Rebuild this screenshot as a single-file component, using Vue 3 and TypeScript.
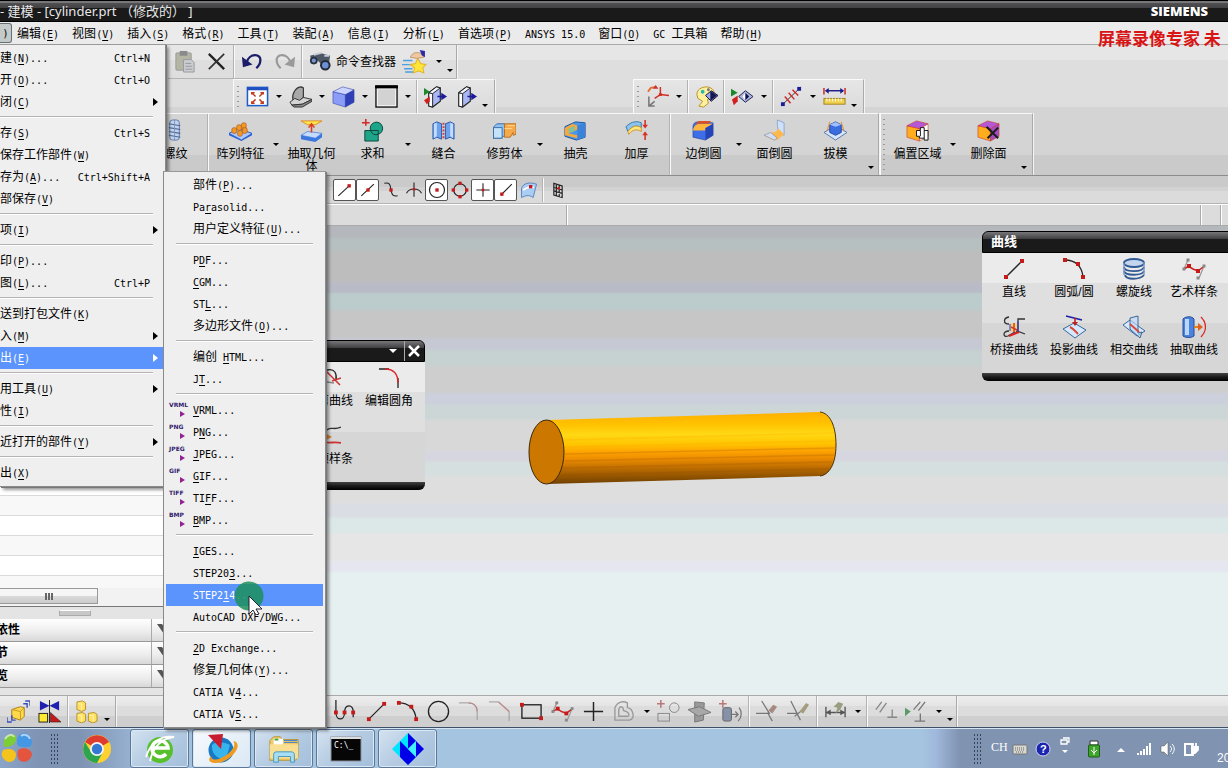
<script setup lang="ts">
import { h, type FunctionalComponent } from 'vue'

/* Splits a caption into Latin and CJK runs; "&" marks the access key that follows it. */
const Txt: FunctionalComponent<{ s: string }> = (p) => {
  const runs = p.s.match(/&.|[\x20-\x25\x27-\x7e]+|[^\x20-\x7e]+/g) ?? []
  return h('span', { class: 'txt' }, runs.map((r) =>
    r[0] === '&' ? h('u', { class: 'lat' }, r[1]) : /[\x20-\x7e]/.test(r[0]) ? h('span', { class: 'lat' }, r) : r))
}
Txt.props = ['s']

interface Tool { k: 'i' | 'd' | 'e' | 's' | 'g' | 't'; n?: string; t?: string; on?: boolean }
const i = (n: string, t = '', on = false): Tool => ({ k: 'i', n, t, on })
const d: Tool = { k: 'd' }
const e: Tool = { k: 'e' }
const s: Tool = { k: 's' }
const g: Tool = { k: 'g' }

const menus = ['编辑(&E)', '视图(&V)', '插入(&S)', '格式(&R)', '工具(&T)', '装配(&A)', '信息(&I)', '分析(&L)', '首选项(&P)', 'ANSYS 15.0', '窗口(&O)', 'GC 工具箱', '帮助(&H)']

interface Item { t: string; key?: string; sub?: boolean; hot?: boolean; tag?: string }
const fileMenu: (Item | null)[] = [
  { t: '建(&N)...', key: 'Ctrl+N' }, { t: '开(&O)...', key: 'Ctrl+O' }, { t: '闭(&C)', sub: true }, null,
  { t: '存(&S)', key: 'Ctrl+S' }, { t: '保存工作部件(&W)' }, { t: '存为(&A)...', key: 'Ctrl+Shift+A' }, { t: '部保存(&V)' }, null,
  { t: '项(&I)', sub: true }, null, { t: '印(&P)...' }, { t: '图(&L)...', key: 'Ctrl+P' }, null,
  { t: '送到打包文件(&K)' }, { t: '入(&M)', sub: true }, { t: '出(&E)', sub: true, hot: true }, null,
  { t: '用工具(&U)', sub: true }, { t: '性(&I)' }, null, { t: '近打开的部件(&Y)', sub: true }, null, { t: '出(&X)' }
]
const exportMenu: (Item | null)[] = [
  { t: '部件(&P)...' }, { t: 'Pa&rasolid...' }, { t: '用户定义特征(&U)...' }, null,
  { t: 'P&DF...' }, { t: '&CGM...' }, { t: 'ST&L...' }, { t: '多边形文件(&O)...' }, null,
  { t: '编创 &HTML...' }, { t: 'J&T...' }, null,
  { t: '&VRML...', tag: 'VRML' }, { t: 'P&NG...', tag: 'PNG' }, { t: '&JPEG...', tag: 'JPEG' }, { t: '&GIF...', tag: 'GIF' }, { t: 'TI&FF...', tag: 'TIFF' }, { t: '&BMP...', tag: 'BMP' }, null,
  { t: '&IGES...' }, { t: 'STEP20&3...' }, { t: 'STEP2&14...', hot: true }, { t: 'AutoCAD DXF/D&WG...' }, null,
  { t: '&2D Exchange...' }, { t: '修复几何体(&Y)...' }, { t: 'CATIA V&4...' }, { t: 'CATIA V&5...' }
]

const standardBar: Tool[] = [i('paste'), i('del'), s, i('undo'), i('redo'), s, i('find'), { k: 't', t: '命令查找器' }, i('star'), d, e]
const viewBar: Tool[] = [g, i('fit'), d, i('seat'), d, i('cube'), d, i('rect'), d, s, i('clipEdit'), i('clip'), e]
const utilBar: Tool[] = [g, i('csys'), d, s, i('palette'), s, i('showhide'), d, s, i('measure'), d, i('ruler'), e]
const featureBar: Tool[] = [i('thread', '螺纹'), s, i('array', '阵列特征'), d, i('extract', '抽取几何体'), i('unite', '求和'), d, i('sew', '缝合'), i('trim', '修剪体'), d, i('shell', '抽壳'), i('thick', '加厚'), s, i('edge', '边倒圆'), d, i('face', '面倒圆'), i('draft', '拔模'), e]
const syncBar: Tool[] = [g, i('offset', '偏置区域'), d, i('delface', '删除面'), e]
const snapBar: Tool[] = [i('endpt', '', true), i('midpt', '', true), i('ctrlpt'), i('inter'), i('center', '', true), i('quad'), i('exist', '', true), i('oncurve', '', true), i('onface'), s, i('grid')]
const leftBar: Tool[] = [i('move'), i('mirror'), s, i('asm'), e]
const curveBar: Tool[] = [i('profile'), i('line'), i('arc'), i('circle'), i('fillet'), i('chamfer'), i('rectpt'), i('spline'), i('plus'), i('offcurve'), d, i('pattern'), i('isect'), i('project'), s, i('qtrim'), i('qextend'), s, i('dim'), d, s, i('constr'), i('auto'), d, e]
const curvePanel: [string, string][] = [['line', '直线'], ['arc', '圆弧/圆'], ['helix', '螺旋线'], ['spline', '艺术样条'], ['bridge', '桥接曲线'], ['projc', '投影曲线'], ['isectc', '相交曲线'], ['extc', '抽取曲线']]
const editPanel: [string, string][] = [['trimc', '修剪曲线'], ['editf', '编辑圆角'], ['smooth', '光顺样条']]

const r = (x: number, y: number, c = '#c41a1a', w = 4) => `<rect x="${x - w / 2}" y="${y - w / 2}" width="${w}" height="${w}" fill="${c}"/>`
const cube = (a: string, b: string, c: string, o = '#445') => `<g stroke="${o}" stroke-width=".6"><path d="M1 7 14 10V23L1 19z" fill="${a}"/><path d="M14 10 23 5V18L14 23z" fill="${b}"/><path d="M1 7 11 2 23 5 14 10z" fill="${c}"/></g>`
const book = '<path d="M5 8 13 2 17 3V17L9 23 5 22z" fill="#a9b8f5" stroke="#222" stroke-width="1.2"/><path d="M5 8 9 9V23L5 22z" fill="#fff" stroke="#222"/><path d="M5 8 13 2 17 3 9 9z" fill="#f4f6ff" stroke="#222"/><path d="M14 12H22" stroke="#1a1a9a" stroke-width="1.6"/><path d="M18 8 24 12 18 16z" fill="#1a1a9a"/>'
const eye = '<path d="M8 12 15 6 23 12 15 18z" fill="#aeb8dd" stroke="#225"/><path d="M12 12 15 8V16z" fill="#fff"/><path d="M15 8 19 12 15 16z" fill="#115"/>'
const ln = (p: string, c = '#222', w = 1.3) => `<path d="${p}" fill="none" stroke="${c}" stroke-width="${w}"/>`

const icons: Record<string, string> = {
  paste: '<rect x="3" y="3" width="16" height="18" rx="1" fill="#b5b5a5" stroke="#999"/><rect x="7" y="1" width="8" height="5" fill="#8a8a8a"/><path d="M11 10h8l3 3v10H11z" fill="#c9ccd2" stroke="#999"/><path d="M13 14h6M13 17h7M13 20h7" stroke="#999"/>',
  del: '<path d="M4 4 20 20" stroke="#222" stroke-width="2.4"/><path d="M20 4 4 20" stroke="#333" stroke-width="1.8"/>',
  undo: '<path d="M6 13C8 3 22 3 20 12C20 15 18 17 16 19" fill="none" stroke="#1c1c6a" stroke-width="2.4"/><path d="M1 7 2 18 12 15z" fill="#1c1c6a"/>',
  redo: '<path d="M18 13C16 3 2 3 4 12C4 15 6 17 8 19" fill="none" stroke="#999" stroke-width="2.2"/><path d="M23 7 22 18 12 15z" fill="#999"/>',
  find: '<path d="M1 6 12 3 22 6 21 13 14 16 9 11 4 14z" fill="#4c5866"/><circle cx="5" cy="11" r="4" fill="#28303e"/><circle cx="5" cy="11" r="2.2" fill="#7794cc"/><circle cx="17" cy="16" r="5.5" fill="#222a38"/><circle cx="17" cy="16" r="3.4" fill="#6e8fd6"/><path d="M5 5 13 3M16 6 21 6" stroke="#c8ccd4" stroke-width="2"/>',
  star: '<path d="M1 11h9M0 15h10M2 19h8M3 22h8" stroke="#4ba0df" stroke-width="1.4"/><path d="M15 9 18 14 23 15 20 18 21 23 16 21 11 23 12 18 8 15 13 14z" fill="#ffe43a" stroke="#e0b62a"/><path d="M8 8C10 3 14 3 18 4L21 8 14 9z" fill="#f0c8a0" stroke="#a87850" stroke-width=".6"/><path d="M17 1 22 2V8L19 6z" fill="#2a2aa8"/>',
  fit: '<rect x="1.500" y="2.500" width="21" height="19" fill="#fff" stroke="#1f5dc8" stroke-width="1.6"/><path d="M1 4H23" stroke="#1f4fc0" stroke-width="3"/><g stroke="#c33a1e" stroke-width="1.5" fill="none"><path d="M6 10V8H9M6 8 10 12M18 10V8H15M18 8 14 12M6 17V19H9M6 19 10 15M18 17V19H15M18 19 14 15"/></g>',
  seat: '<path d="M4 15C3 9 7 2 13 2L15 3V13L10 18z" fill="#a8a8a8" stroke="#333" stroke-width="1.2"/><path d="M1 18 6 14 11 16 15 13 24 15 14 20 3 21z" fill="#d4d4d4" stroke="#333"/><path d="M3 21 14 20 24 15V17L14 23H5z" fill="#888" stroke="#333"/>',
  cube: cube('#8a9cf8', '#2f3fb5', '#ccd4ff', '#3344a8'),
  rect: '<rect x="1" y="1" width="22" height="22" fill="#d2d2d2" stroke="#111" stroke-width="1.4"/><rect x="2.500" y="4" width="19" height="17.500" fill="none" stroke="#f4f4f4"/><path d="M0 2H24" stroke="#000" stroke-width="3"/>',
  clipEdit: book + '<path d="M0 3 6 7 0 11z" fill="#1a8a2c"/><path d="M0 16 6 12V17L3 20z" fill="#d02020"/>',
  clip: book,
  csys: ln('M15 10V2M15 10 9 14M15 10 24 11', '#d22f22', 1.5) + ln('M3 12V22H9M3 22 9 17', '#777', 1.6) + '<path d="M2 7 5 3 11 2" fill="none" stroke="#e07030" stroke-width="2"/><path d="M10 0 13 4 7 4z" fill="#c33"/>' + r(15, 10, '#d22f22', 3),
  palette: '<path d="M2 10C2 0 20-1 20 9L17 14 13 15 14 19 9 23 4 22 8 17 3 14z" fill="#fff0a0" stroke="#b89020"/><circle cx="8" cy="7" r="2" fill="#26b8b0"/><circle cx="14" cy="5" r="1.500" fill="#777"/><path d="M11 11 17 6 24 11 17 17z" fill="#98a8e8" stroke="#113"/><path d="M16 6 23 11 16 17z" fill="#181850"/>',
  showhide: '<path d="M0 4 7 8 0 12z" fill="#188a2c"/><path d="M1 15 7 11V17L3 21z" fill="#d02020"/>' + eye,
  measure: ln('M2 21 22 2', '#333', 1) + ln('M5 12 11 19M9 8 15 15M13 5 19 11', '#d02828', 1.5) + r(3, 20, '#1c1c9a') + r(20, 4, '#1c1c9a'),
  ruler: ln('M1 3V10M23 3V10', '#c22', 1.5) + ln('M3 6H21', '#1a1a8a', 1.5) + '<path d="M2 6 6 3V9zM22 6 18 3V9z" fill="#1a1a8a"/><rect x="1" y="14" width="22" height="6" fill="#f2d24a" stroke="#a08020"/><path d="M4 14v3M7 14v3M10 14v3M13 14v3M16 14v3M19 14v3" stroke="#fff"/>',
  thread: '<rect x="6" y="1" width="10" height="21" rx="3" fill="#c3d3ec" stroke="#5c78a8"/>' + ln('M5 5 17 7M5 9 17 11M5 13 17 15M5 17 17 19', '#4a6898', 1.2) + ln('M11 1V22', '#7d95bd', 1),
  array: '<path d="M0 15 10 10 24 15 13 22z" fill="#a8c8ff" stroke="#2858c8"/><path d="M0 15V17L13 23 24 17V15L13 22z" fill="#2a62dc"/><g fill="#f09828" stroke="#a84e10" stroke-width=".6"><rect x="3" y="9" width="5" height="6" rx="2"/><rect x="8" y="6" width="5" height="6" rx="2"/><rect x="13" y="4" width="5" height="6" rx="2"/><rect x="9" y="12" width="5" height="6" rx="2"/><rect x="14" y="9" width="5" height="6" rx="2"/></g>',
  extract: '<path d="M1 17 8 13 23 15 16 20z" fill="#c4dcff" stroke="#3a70d0" stroke-width=".7"/><path d="M1 17V21L16 24V20zM16 20 23 15V19L16 24z" fill="#3a78e0"/><path d="M1 2H23L16 6H8z" fill="#ffe94a" stroke="#e08a20"/><path d="M12 14V5M9 9 12 5 15 9" stroke="#dc3d20" stroke-width="1.6" fill="none"/>',
  unite: '<path d="M4 12H10A6.500 6.500 0 1 1 18 16V23H4z" fill="#1da58a" stroke="#0d4538"/><path d="M10 12A6 6 0 0 0 18 16V12z" fill="none" stroke="#0d4538"/>' + ln('M5 0V7M1 4H9', '#d22828', 1.6),
  sew: '<path d="M1 5 5 3 10 5V21L5 19 1 21zM14 5 19 3 23 5V21L19 19 14 21z" fill="#6ca2ee" stroke="#2858a8"/><path d="M2 5 5 4V18L2 20zM19 4 22 5V20L19 18z" fill="#c4dcff"/><path d="M12 4V21" stroke="#e03838" stroke-width="2" stroke-dasharray="2 1.500"/>',
  trim: '<path d="M0 9 4 5H12V17L9 20H0z" fill="#8fc0ee" stroke="#3870a8"/><rect x="0.500" y="9" width="9" height="11" fill="#c4e2fa" stroke="#3870a8"/><path d="M12 5 24 5V16L21 17V14L18 19H12z" fill="#f5aa4a" stroke="#b87024"/><path d="M12 10H20M15 7 23 7" stroke="#ffd898"/>',
  shell: '<path d="M1 8 12 3 22 4V19L13 22 1 18z" fill="#4a96e8" stroke="#1c5098"/><path d="M1 9 9 5 14 7V11L5 15 14 17V20L1 17z" fill="#f7a83c"/><path d="M5 10 11 7V12L5 15z" fill="#7ac4a0"/><path d="M14 7 22 4V19L14 22z" fill="#3a82da"/>',
  thick: '<path d="M1 8C7 2 13 2 17 4V9C12 6 8 7 3 13z" fill="#8ac4ee" stroke="#3878a8"/><path d="M3 13C8 7 12 6 17 9V13C12 10 8 11 4 16z" fill="#ffe878" stroke="#d09030"/><path d="M21 1V8M21 14V22" stroke="#d83020" stroke-width="1.6"/><path d="M18 6H24L21 10zM18 17H24L21 13z" fill="#d83020"/>',
  edge: '<path d="M1 8C1 5 3 3 6 3L22 4V17L14 22 1 19z" fill="#3d6ee8" stroke="#1c3898" stroke-width=".6"/><path d="M1 12C2 7 4 6 7 5L22 5 14 9V12z" fill="#ffb63c"/><path d="M3 6 7 2H20L17 5H7z" fill="#d85028"/><path d="M14 10 22 5V17L14 22z" fill="#2444b8"/>',
  face: '<path d="M15 1 22 4V17L16 13C15 9 15 5 15 1z" fill="#cfe0fa" stroke="#6f94c8" stroke-width=".7"/><path d="M1 17 9 14C14 14 15 12 16 10L22 16 15 22 11 22z" fill="#ffb84c"/><path d="M1 17 8 14 15 20 12 22z" fill="#d2ddf2" stroke="#8890a8" stroke-width=".7"/>',
  draft: '<path d="M0 14 12 7 24 14 12 22z" fill="#d5e5ff" stroke="#5878a8"/><path d="M6 6 12 3 18 6V14L12 17 6 14z" fill="#3a6ee0" stroke="#24489a"/><path d="M6 6 12 3 18 6 12 8z" fill="#a0c0ff"/><path d="M3 13 6 3M21 13 18 3" stroke="#e88a30"/>',
  offset: cube('#ffad1c', '#fff', '#b558d8', '#c83a28') + '<path d="M11 12h4V9h4v3h4v10h-4v-2h-5v-2h-3z" fill="#fff" stroke="#111"/><path d="M15 12v6M19 12v8" stroke="#111"/>',
  delface: cube('#ffad1c', '#a54cc4', '#b558d8', '#c83a28') + '<path d="M10 8 22 20M22 9 11 20" stroke="#1c1c1c" stroke-width="2.2"/>',
  endpt: ln('M4 19 16 8') + r(17, 7), midpt: ln('M4 19 19 5') + r(12, 12),
  ctrlpt: ln('M4 4C12 2 11 8 12 12S13 20 20 19') + r(12, 12), inter: ln('M12 3V20M3 16C6 9 18 9 21 16') + r(12, 11, '#c41a1a', 3),
  center: '<circle cx="12" cy="12" r="9" fill="none" stroke="#222" stroke-width="1.4"/>' + r(12, 12),
  quad: '<circle cx="12" cy="12" r="7.500" fill="none" stroke="#222" stroke-width="1.400"/>' + r(12, 4) + r(12, 20) + r(4, 12) + r(20, 12),
  exist: ln('M12 4V20M4 12H20') + r(12, 12, '#c41a1a', 3), oncurve: ln('M6 18 19 5') + r(7, 17),
  onface: '<path d="M3 10C5 4 12 2 21 5L17 21C11 17 8 19 3 21z" fill="#aacdf5" stroke="#4a78b8"/><path d="M5 12C10 8 14 8 18 9" stroke="#fff" fill="none" stroke-width="2"/>' + r(14, 8),
  grid: ln('M7 4 17 7V21L7 18zM7 9 17 12M7 13 17 16M10 5V19M13.500 6V20', '#222', 1.4) + r(13, 10, '#c41a1a', 3),
  line: ln('M4 20 20 4') + r(4, 20) + r(20, 4), arc: ln('M3 3C13 3 20 9 21 20') + r(3, 3) + r(16, 7) + r(21, 20),
  circle: '<circle cx="12" cy="12" r="10.500" fill="none" stroke="#222" stroke-width="1.400"/>',
  profile: ln('M2 0V13C2 22 11 22 11 13C11 4 20 4 20 12V18') + r(2, 13) + r(11, 13) + r(20, 13),
  fillet: ln('M1 3H11C17 3 20 7 20 12V21', '#999', 1) + ln('M11 3C17 3 20 7 20 12', '#b88', 1.300),
  chamfer: ln('M0 2H10L21 12V22', '#999', 1) + ln('M10 2 21 12', '#b88', 1.300),
  rectpt: '<rect x="2" y="5" width="20" height="14" fill="none" stroke="#222" stroke-width="1.400"/>' + r(2, 5) + r(22, 19),
  spline: ln('M2 12 6 3M17 21 22 9', '#999') + ln('M6 9 11 12 16 14M2 12 7 9M16 14 21 10', '#c22', 1.5) + r(6, 3, '#888', 3) + r(2, 12, '#888', 3) + r(22, 9, '#888', 3) + r(16, 21, '#888', 3) + r(7, 9) + r(16, 14),
  plus: ln('M12 2V22M2 12H22', '#222', 1.5),
  offcurve: ln('M2 21V8C5 1 11 1 15 3V8C21 9 24 20 17 21zM6 17V10C7 5 11 7 11 11C17 12 18 17 15 17z', '#999', 1.4),
  pattern: ln('M4 0V8M0 4H8', '#b87878', 1.600) + '<circle cx="18" cy="8" r="5" fill="none" stroke="#888"/><rect x="1" y="14" width="12" height="8" fill="none" stroke="#888"/>',
  isect: '<path d="M7 2 17 3 16 21 7 23z" fill="#999" stroke="#777"/><path d="M0 10 12 7 24 13 11 17z" fill="#a8a8a8" stroke="#777"/>',
  project: ln('M4 0V8M0 4H8', '#b87878', 1.6) + '<rect x="4" y="8" width="9" height="14" rx="2" fill="#8592a8" stroke="#666"/>' + ln('M13 15H20M17 12 20 15 17 18M21 8C24 12 24 18 20 22', '#777'),
  qtrim: ln('M0 14H14L6 1M12 13 17 22', '#777', 1.300) + '<path d="M13 11 18 5 22 7 17 14z" fill="#a68a80"/>',
  qextend: ln('M0 14H12M4 1 14 21M8 17 18 9', '#777', 1.300) + '<path d="M13 12 20 3 23 5 17 14z" fill="#a49c80"/>',
  dim: ln('M2 7V18M22 7V18M2 13H22', '#555', 1.400) + '<path d="M2 13 7 10V16zM22 13 17 10V16z" fill="#555"/><path d="M10 7 15 2 20 4 17 10 12 14 14 8z" fill="#999e80"/>',
  constr: ln('M2 10 8 2M6 13 13 3M14 18H24M19 10V18', '#888', 1.400),
  auto: '<path d="M0 8 6 12 0 17z" fill="#5a9a6c"/>' + ln('M9 10 16 2M14 11 21 2M10 22H21M16 14V22', '#777', 1.400),
  helix: '<ellipse cx="12" cy="6" rx="9" ry="4" fill="#c4d6ee"/><g fill="none" stroke="#315a94" stroke-width="1.800"><ellipse cx="12" cy="6" rx="10" ry="4"/><path d="M2 10C2 15 20 16 22 10M2 14C3 19 20 19 22 14M3 18C4 23 18 23 22 18"/></g>' + ln('M2 6V18M22 5V18', '#7697c4', 1.4),
  bridge: ln('M7 2C1 3 1 9 7 9M23 4H16V16M7 16C0 16 1 23 6 21L15 16 23 19', '#333') + ln('M7 21 17 17', '#d22', 2) + '<path d="M8 9 15 8 14 17 8 16z" fill="#f4d070"/>' + ln('M12 8V17M9 12 15 15', '#d63a2a', 1.500) + ln('M8 9V16M16 6V17', '#2a3ac0', 1),
  projc: '<path d="M1 14 12 8 24 15 13 23z" fill="#d4e8ff" stroke="#3a6898"/>' + ln('M8 12C12 14 14 17 16 19', '#d84830', 2) + ln('M4 1 20 5', '#1c1ca8', 1.600) + ln('M13 3V9', '#b22', 1.600) + '<path d="M10 7H16L13 11z" fill="#b22"/>',
  isectc: '<path d="M1 10 8 5 23 16 15 21z" fill="#d8eaff" stroke="#3a6898"/><path d="M8 3 16 1V18L20 17 18 23 8 14z" fill="#bcd8ff99" stroke="#3a6898"/>' + ln('M8 9 17 17', '#d84830', 1.800),
  extc: '<path d="M1 4C4 1 10 1 12 4V21C9 23 4 23 1 21z" fill="#4a82dc" stroke="#2a4a98"/><path d="M3 4H7V20H3z" fill="#bcd6ff"/>' + ln('M12 12H19', '#e08020', 2) + '<path d="M16 8 21 12 16 16z" fill="#e06020"/>' + ln('M19 2C25 8 25 16 19 22', '#d22', 1.300),
  trimc: ln('M10 4C18 2 20 8 19 14', '#222') + ln('M9 5 23 19M15 15 24 12', '#c33', 1.500) + ln('M10 16 17 17', '#888'),
  editf: ln('M2 3H12M21 12V22', '#222') + ln('M8 3C17 3 21 8 21 17', '#d22', 1.300),
  smooth: ln('M8 8C14 1 16 7 24 3', '#333') + ln('M8 18C14 20 16 17 24 19', '#c33', 1.800) + '<path d="M8 9 15 13 9 16z" fill="#d88030"/>',
  move: '<path d="M5 10 14 7 18 8V17L14 21 5 18z" fill="#ffd94c" stroke="#a87c18"/><path d="M5 10 14 12 18 8M14 12V21" fill="none" stroke="#c89828"/>' + ln('M17 4H21V8M19 1H24V6M5 16V21H9M0 18V23H5', '#3a50b8', 1.5),
  mirror: '<path d="M2 1 12 6 22 1V11L12 6 2 11z" fill="#2020b0"/><rect x="1" y="14" width="9" height="9" fill="#ffe92c" stroke="#222"/><path d="M13 13 24 23H13z" fill="#c81818" stroke="#222" stroke-width=".6"/>' + ln('M12 0V24', '#222', 1),
  asm: '<g fill="#ffe060" stroke="#a88018" stroke-width=".8"><path d="M2 2 8 1 11 3V10L7 12 2 10zM2 14 8 13 11 15V22L7 24 2 22zM14 14 20 13 23 15V22L19 24 14 22z"/></g><path d="M3 4H7V10M3 16H7V22M15 16H19V22" stroke="#fff6b8" fill="none"/>'
}
</script>

<template>
  <div class="app">
    <header class="title"><span>- 建模 - [cylinder.prt （修改的） ]</span><b>SIEMENS</b></header>
    <nav class="menubar">
      <button class="pressed"><Txt s=")" /></button>
      <button v-for="m in menus" :key="m"><Txt :s="m" /></button>
    </nav>

    <div class="toolrows">
      <div class="row r1">
        <div class="bar std">
          <template v-for="(t, n) in standardBar" :key="n">
            <button v-if="t.k === 'i'" class="tool" :class="{ wide: t.n === 'star' }" :aria-label="t.n"><svg viewBox="0 0 24 24" v-html="icons[t.n!]" /></button>
            <span v-else-if="t.k === 't'" class="cap">{{ t.t }}</span>
            <i v-else :class="t.k" />
          </template>
        </div>
      </div>
      <div class="row r2">
        <div v-for="(b, bi) in [viewBar, utilBar]" :key="bi" class="bar view">
          <template v-for="(t, n) in b" :key="n">
            <button v-if="t.k === 'i'" class="tool" :aria-label="t.n"><svg viewBox="0 0 24 24" v-html="icons[t.n!]" /></button>
            <i v-else :class="t.k" />
          </template>
        </div>
      </div>
      <div class="row r3">
        <div v-for="(b, bi) in [featureBar, syncBar]" :key="bi" class="bar big">
          <template v-for="(t, n) in b" :key="n">
            <button v-if="t.k === 'i'" class="tool"><svg viewBox="0 0 24 24" v-html="icons[t.n!]" /><span>{{ t.t }}</span></button>
            <i v-else :class="t.k" />
          </template>
        </div>
      </div>
    </div>
    <div class="snap">
      <template v-for="(t, n) in snapBar" :key="n">
        <button v-if="t.k === 'i'" class="tool" :class="{ on: t.on }" :aria-label="t.n"><svg viewBox="0 0 24 24" v-html="icons[t.n!]" /></button>
        <i v-else :class="t.k" />
      </template>
    </div>
    <div class="status"><span class="cue" /><span class="info" /><span class="cell" /><span class="last" /></div>

    <main class="work">
      <aside class="nav">
        <div class="tree"><p v-for="n in 5" :key="n" /></div>
        <div class="hscroll"><div class="thumb"><i /><i /><i /></div></div>
        <div class="split"><i /></div>
        <button v-for="x in ['依性', '节', '览']" :key="x" class="acc"><b>{{ x }}</b><span><svg viewBox="0 0 12 12"><path d="M1 0 8 10V3L6 0z" fill="#555" /></svg></span></button>
      </aside>
      <section class="canvas">
        <svg class="part" viewBox="0 0 310 76">
          <defs>
            <linearGradient id="body" x1="0" y1="0" x2="0.022" y2="1" gradientUnits="objectBoundingBox">
              <stop offset="0" stop-color="#ffae00" /><stop offset=".18" stop-color="#ffc200" /><stop offset=".32" stop-color="#ffd914" /><stop offset=".46" stop-color="#ffc400" /><stop offset=".55" stop-color="#ffa500" /><stop offset=".66" stop-color="#ec8c00" /><stop offset=".8" stop-color="#b86a00" /><stop offset="1" stop-color="#704000" />
            </linearGradient>
          </defs>
          <path d="M19 9 292 1C302 2 308 15 308 34S301 64 292 65L19 73z" fill="url(#body)" />
          <g fill="none" stroke-width="1.500" opacity=".2"><path d="M36 29 306 22M37 36 307 30" stroke="#ff9a00" /><path d="M37 43 307 37M37 50 306 44M35 57 304 51M32 64 301 58" stroke="#8c4800" /></g>
          <path d="M292 1C302 2 308 15 308 34S301 64 292 65" fill="none" stroke="#4a3208" />
          <ellipse cx="18.500" cy="41" rx="17.500" ry="32" fill="#cc7800" stroke="#3a2808" />
        </svg>
        <div class="pal edit">
          <header><span class="tri" /><button aria-label="关闭"><svg viewBox="0 0 12 12"><path d="M1 1 11 11M11 1 1 11" stroke="#fff" stroke-width="2.500" /></svg></button></header>
          <div class="grid2"><button v-for="c in editPanel" :key="c[0]"><svg viewBox="0 0 24 24" v-html="icons[c[0]]" />{{ c[1] }}</button></div>
          <footer />
        </div>
        <div class="pal curves">
          <header><b>曲线</b></header>
          <div class="grid4"><button v-for="c in curvePanel" :key="c[0]"><svg viewBox="0 0 24 24" v-html="icons[c[0]]" />{{ c[1] }}</button></div>
          <footer />
        </div>
      </section>
    </main>

    <div class="bottom">
      <div v-for="(b, bi) in [leftBar, curveBar]" :key="bi" class="bar sk">
        <template v-for="(t, n) in b" :key="n">
          <button v-if="t.k === 'i'" class="tool" :aria-label="t.n"><svg viewBox="0 0 24 24" v-html="icons[t.n!]" /></button>
          <i v-else :class="t.k" />
        </template>
      </div>
    </div>

    <footer class="taskbar">
      <button class="orb" aria-label="开始"><svg viewBox="0 0 34 34"><path d="M4 15C1 3 12 0 16 4C17 10 14 15 4 15z" fill="#7ccd36" /><path d="M18 14C15 7 19 1 24 1S34 8 31 14C27 16 22 15 18 14z" fill="#4497e4" /><path d="M3 18C9 16 15 17 16 22C16 30 10 31 6 29C1 25 1 22 3 18z" fill="#f4c31c" /><path d="M18 18C24 14 31 17 32 22C31 29 24 32 19 28C17 25 17 21 18 18z" fill="#e4543e" /><path d="M5 7C8 2 13 2 14 5M21 4C25 1 29 4 30 7" stroke="#ffffff90" stroke-width="2" fill="none" /></svg></button>
      <i class="dots" />
      <button class="plain" aria-label="Chrome"><svg viewBox="0 0 32 32"><circle cx="16" cy="16" r="14" fill="#ffd12e" /><path d="M16 16 4 9A14 14 0 0 1 28 9z" fill="#dd3c2e" /><path d="M4 9A14 14 0 0 0 16 30L22 19 16 16 10 19z" fill="#2da44e" /><circle cx="16" cy="16" r="7" fill="#f4f4f4" /><circle cx="16" cy="16" r="5.200" fill="#3478d4" /></svg></button>
      <button class="app-btn" aria-label="360"><svg viewBox="0 0 32 32"><circle cx="16" cy="17" r="13" fill="#57c02c" /><path d="M22 21A8 8 0 1 1 24 15H9" fill="none" stroke="#fff" stroke-width="3.500" /><path d="M2 24C6 10 17 2 30 4C19 5 9 13 6 28" fill="none" stroke="#fff" stroke-width="1.800" /></svg></button>
      <button class="app-btn" aria-label="NX"><svg viewBox="0 0 32 32"><circle cx="15" cy="17" r="12.500" fill="#1878c4" /><path d="M6 12C10 8 18 9 24 12L20 26C11 27 5 20 6 12z" fill="#38b4ec" /><path d="M27 8C37 9 30 24 16 29C6 32 0 28 5 23C5 29 14 27 22 21C28 16 30 11 27 8z" fill="#ef9a20" /><path d="M2 2 17 1 15 16z" fill="#c81c30" /></svg></button>
      <button class="app-btn" aria-label="资源管理器"><svg viewBox="0 0 34 32"><path d="M2 7 6 3H13L15 6H32V25L29 28H2z" fill="#eecb66" stroke="#b89238" /><path d="M6 5H16V12H6z" fill="#fff" /><path d="M7 5h4v2H7z" fill="#38a848" /><path d="M17 7H31M17 9H31" stroke="#387ed0" /><path d="M2 11H32V26H2z" fill="#f9df91" /><path d="M6 30V22C6 19 8 19 11 19H24C27 19 28 20 28 22V30H24V24H11V30z" fill="#a8def4" stroke="#4295c0" /></svg></button>
      <button class="app-btn" aria-label="命令提示符"><svg viewBox="0 0 32 32"><rect x="1" y="4" width="30" height="24" fill="#060606" stroke="#8c929a" /><path d="M1 5H31" stroke="#ddd" stroke-width="2" /><text x="4" y="15" font-size="8" fill="#fff" font-family="DejaVu Sans Mono">C:\_</text></svg></button>
      <button class="app-btn" aria-label="工作台"><svg viewBox="0 0 32 32"><path d="M16 0 24 8V24L16 32 0 16z" fill="#00e5ff" /><path d="M16 0 24 8 16 16zM24 8 32 16 24 24zM8 8 16 16 8 24zM16 16 24 24 16 32 8 24z" fill="#0000e8" /><path d="M16 16 24 8V24z" fill="#42f0ff" /></svg></button>
      <div class="tray">
        <i class="dots" />
        <span class="ime">CH</span>
        <svg class="t1" viewBox="0 0 16 16"><rect x="1" y="4" width="14" height="9" rx="1" fill="#d8d8d0" stroke="#777" /><path d="M3 7H13M3 9H13M4 11H12" stroke="#666" stroke-dasharray="1 1" /></svg>
        <svg class="t1" viewBox="0 0 16 16"><circle cx="8" cy="8" r="7" fill="#1b25b0" stroke="#d2d6f0" /><text x="5" y="12" font-size="11" font-weight="700" fill="#fff" font-family="Liberation Sans">?</text></svg>
        <svg class="t2" viewBox="0 0 12 18"><path d="M4 2H10V6H8M2 4H8V8H2z" fill="none" stroke="#fff" stroke-width="1.300" /><path d="M3 14H9L6 17z" fill="#fff" /></svg>
        <svg class="t3" viewBox="0 0 16 18"><path d="M4 1H12V5H4z" fill="#fff" stroke="#333" /><rect x="2.500" y="5" width="11" height="12" rx="1" fill="#3ca52a" stroke="#215f18" /><path d="M8 15V7M5 10 8 13 11 10" stroke="#fff" fill="none" /></svg>
        <svg class="t4" viewBox="0 0 16 16"><path d="M4 11 8 7 12 11z" fill="#fff" /></svg>
        <svg class="t1" viewBox="0 0 16 16"><path d="M1 14V12M4 14V10M7 14V8M10 14V5M13 14V2" stroke="#fff" stroke-width="2" /></svg>
        <svg class="t1" viewBox="0 0 16 16"><path d="M1 5H4L8 1V15L4 11H1z" fill="#fff" stroke="#555" stroke-width=".5" /><path d="M10 5C12 7 12 9 10 11M12 3C15 6 15 10 12 13" stroke="#fff" fill="none" /></svg>
        <svg class="t1" viewBox="0 0 16 16"><path d="M4 3H9V14H2V3z" fill="none" stroke="#fff" stroke-width="2" /><path d="M8 6H15V9L12 12H10V15M10 2V6M13 2V6" stroke="#fff" stroke-width="1.800" fill="#fff" /></svg>
        <span class="clock">20</span>
      </div>
    </footer>

    <strong class="mark">屏幕录像专家 未</strong>
    <div class="menu file" role="menu">
      <template v-for="(m, n) in fileMenu" :key="n">
        <hr v-if="!m" />
        <button v-else role="menuitem" :class="{ hot: m.hot }"><Txt :s="m.t" /><Txt v-if="m.key" class="key" :s="m.key" /><i v-if="m.sub" class="more" /></button>
      </template>
    </div>
    <div class="menu export" role="menu">
      <template v-for="(m, n) in exportMenu" :key="n">
        <hr v-if="!m" />
        <button v-else role="menuitem" :class="{ hot: m.hot }"><span class="ico"><template v-if="m.tag"><em>{{ m.tag }}</em><i /></template></span><Txt :s="m.t" /></button>
      </template>
    </div>
    <svg class="pointer" viewBox="0 0 32 34"><circle cx="15" cy="15" r="14.500" fill="#1c8f5c" opacity=".85" /><path d="M15 15V33L19 29 22 34 25 33 22 28H28z" fill="#fff" stroke="#223" /></svg>
  </div>
</template>

<style>
html, body { overflow: hidden; }
.txt { white-space: pre; }
.txt .lat { font-family: "DejaVu Sans Mono", "Liberation Mono", monospace; font-size: 10px; line-height: 10px; }
.txt u { text-underline-offset: 2px; }
</style>

<style scoped>
* { box-sizing: border-box; }
.app { position: relative; display: flex; flex-direction: column; min-height: 100vh; overflow: hidden; background: #dedede; color: #000; font: 12px/16px "Liberation Sans", "Noto Sans CJK SC", sans-serif; }
button { border: 0; background: none; padding: 0; margin: 0; font: inherit; color: inherit; }
svg { display: block; flex: none; }
.title { display: flex; justify-content: space-between; align-items: center; height: 22px; padding: 0 20px 0 0; color: #e8e8e8; background: linear-gradient(#000 0 1px, #77777a 1px 3px, #505053 3px, #424245 8px, #1a1a1a 8px 21px, #000 21px); font-family: "Noto Sans", "Noto Sans CJK SC", sans-serif; font-size: 13px; white-space: pre; }
.title b { font: 800 13px/24px "Open Sans", sans-serif; color: #fff; }
.menubar { display: flex; align-items: center; gap: 13px; height: 23px; background: #ebebeb; border-bottom: 1px solid #aaa; }
.menubar button { flex: none; padding-top: 2px; }
.menubar .pressed { width: 12px; height: 20px; margin-right: -8px; border: 1px solid #667070; border-left: 0; border-radius: 0 3px 3px 0; background: #c4caca; padding: 0; }
.mark { position: absolute; right: 0; top: 28px; width: 130px; white-space: nowrap; color: #d91414; font: 700 17px/20px "Noto Sans CJK SC", sans-serif; z-index: 1; }
.toolrows { background: linear-gradient(#e6e6e6 0 15px, #dedede 15px 62px, #d4d4d4 62px 110px, #cacaca 110px); border-bottom: 1px solid #8c8c8c; }
.row { display: flex; }
.r1 { height: 34px; } .r2 { height: 34px; } .r3 { height: 62px; }
.bar { display: flex; flex: none; align-items: center; border-right: 1px solid #aaa; box-shadow: 1px 0 #f4f4f4; }
.tool { display: flex; flex: none; align-items: center; justify-content: center; }
.tool svg { width: 23px; height: 23px; }
.std { margin-left: 168px; width: 289px; border-bottom: 1px solid #b4b4b4; }
.std .tool { width: 32px; }
.std .tool.wide { width: 36px; }
.std .tool.wide svg { width: 25px; height: 25px; }
.cap { width: 60px; white-space: nowrap; }
i.s { flex: none; align-self: stretch; width: 4px; background: linear-gradient(90deg, #b2b2b2 50%, #fafafa 50%) center / 2px 100% no-repeat; }
i.d, i.e { flex: none; align-self: stretch; width: 13px; display: flex; align-items: center; justify-content: center; }
i.e { width: 10px; align-items: flex-end; padding-bottom: 6px; }
i.d::after, i.e::after { content: ""; border: 3px solid transparent; border-top-color: #000; border-bottom: 0; }
i.g { flex: none; align-self: stretch; width: 8px; margin: 5px 0; background: radial-gradient(circle, #999 1px, transparent 1px) center / 4px 5px; background-repeat: repeat-y; }
.r2 .bar { border-top: 1px solid #fafafa; border-left: 1px solid #fafafa; background: linear-gradient(#e6e6e6, #d9d9d9); }
.view { margin-left: 233px; width: 262px; }
.view + .view { margin-left: 138px; width: 231px; }
.view .tool { width: 30px; }
.view i.s { width: 6px; }
.big { margin-left: 145px; width: 734px; border-top: 1px solid #f8f8f8; align-items: flex-start; }
.big + .big { margin-left: 1px; width: 153px; border-left: 1px solid #fafafa; }
.big .tool { width: 61px; flex-direction: column; padding-top: 5px; }
.big .tool span { width: 48px; margin-top: 6px; line-height: 12px; text-align: center; }
.big i.d { width: 10px; }
.big i.g { width: 6px; }
.big i.s:nth-of-type(n + 4) { width: 6px; }
.snap { display: flex; align-items: center; height: 28px; padding-left: 333px; background: linear-gradient(#cacaca 0 11px, #d2d2d2 11px 15px, #dbdbdb 15px); }
.snap .tool { width: 23px; height: 22px; border-radius: 2px; }
.snap .tool svg { width: 20px; height: 20px; }
.snap .on { background: #fff; border: 1px solid #555; }
.snap i.s { margin: 2px 1px; }
.status { display: flex; height: 22px; border-top: 1px solid #fff; border-bottom: 1px solid #aaa; background: #dcdcdc; box-shadow: 0 -1px #b4b4b4; }
.status span { border-right: 1px solid #aaa; box-shadow: 1px 0 #fff; }
.status .cue { width: 567px; } .status .info { flex: 1; } .status .cell { width: 20px; } .status .last { width: 7px; border: 0; }
.work { display: flex; flex: 1; }
.nav { display: flex; flex-direction: column; justify-content: flex-end; width: 326px; flex: none; background: #e4e4e4; padding-bottom: 7px; }
.tree { flex: 1; display: flex; flex-direction: column; justify-content: flex-end; background: #fff; }
.tree p { height: 20px; margin: 0; border-top: 1px solid #dadada; }
.tree p:nth-child(odd) { background: #f8f8f8; }
.tree p:last-child { height: 13px; }
.hscroll { height: 19px; background: #f2f2f2; border-bottom: 1px solid #777; }
.thumb { display: flex; justify-content: center; align-items: center; gap: 1px; width: 98px; height: 16px; border: 1px solid #999; border-left: 0; background: linear-gradient(#f6f6f6 50%, #dadada 50%, #ccc); }
.thumb i { width: 2px; height: 7px; background: #666; }
.split { height: 12px; }
.split i { display: block; width: 32px; height: 6px; margin: 3px 0 0 59px; background: #c8c8c8; border: 1px solid #aaa; border-top-color: #fff; }
.acc { display: flex; height: 23px; border-bottom: 1px solid #999; background: linear-gradient(#fff, #ececec 60%, #d8d8d8); text-align: left; line-height: 23px; }
.acc b { width: 152px; text-indent: -4px; border-right: 1px solid #aaa; }
.acc svg { width: 12px; height: 12px; margin: 5px 0 0 4px; }
.canvas { position: relative; flex: 1; background: linear-gradient(#b4b7bc 0 10px, #b6c0c0 14px 22px, #bdbdbd 28px 54px, #b9bcc6 58px 66px, #bccbcc 68px 82px, #c6c6c6 86px 110px, #c6c9d3 114px 122px, #c6d1d1 126px 138px, #cecece 142px 166px, #ccd0dc 168px 177px, #ccd6d6 180px 192px, #d8d8d8 195px 223px, #d6d6e0 226px 234px, #d6dfdf 237px 248px, #dedede 251px 276px, #dadde3 279px 290px, #dce8e8 293px 306px, #e6e6e6 308px 334px, #e6e6f0 336px 345px, #e6f0f0 347px); }
.part { position: absolute; left: 202px; top: 185px; width: 310px; height: 76px; }
.pal { position: absolute; background: linear-gradient(#ebebeb 0 52px, #dfdfdf 52px 92px, #d6d6d6 92px); color: #000; border-radius: 6px; }
.pal header { display: flex; align-items: center; height: 22px; border-radius: 6px 6px 0 0; border: 1px solid #000; background: linear-gradient(#77777a, #3e3e40 7px, #1a1a1a 7px); color: #fff; padding-left: 8px; font-size: 13px; line-height: 20px; }
.pal footer { height: 8px; background: linear-gradient(#444, #1a1a1a 4px, #000); border-radius: 0 0 6px 6px; }
.edit { left: -31px; top: 114px; width: 130px; }
.edit header { justify-content: flex-end; padding-right: 3px; }
.edit header button { border-left: 1px solid #aaa; height: 20px; padding: 4px 1px 4px 3px; }
.edit header svg { width: 12px; height: 12px; }
.tri { border: 4px solid transparent; border-top-color: #fff; border-bottom: 0; margin-right: 7px; }
.curves { right: -6px; top: 5px; width: 252px; }
.grid2, .grid4 { display: grid; grid-template-columns: 60px 60px; grid-auto-rows: 58px; padding: 4px 0 0 4px; height: 120px; }
.grid4 { grid-template-columns: repeat(4, 60px); padding-left: 2px; }
.grid2 button, .grid4 button { display: flex; flex-direction: column; align-items: center; justify-content: flex-start; white-space: nowrap; gap: 3px; }
.grid2 svg, .grid4 svg { width: 24px; height: 24px; }
.bottom { display: flex; height: 33px; border-top: 1px solid #aaa; border-bottom: 1px solid #3d5068; background: linear-gradient(#ededed, #e4e4e4 10px, #dcdcdc 10px 20px, #cfcfcf 20px); }
.sk { width: 116px; padding-left: 3px; }
.sk + .sk { margin-left: 214px; width: 627px; padding-left: 0; }
.sk .tool { width: 31px; }
.sk i.s { width: 6px; }
.taskbar { display: flex; align-items: center; height: 40px; border-top: 1px solid #d4e4f2; background: linear-gradient(90deg, #8aa4c8, #7f93b3 40px 80px, #96b0d0 130px, #a5c4df 200px, #a5c4df calc(100% - 306px), #a0b8dc calc(100% - 292px), #8093b0 calc(100% - 268px)); }
.orb { width: 34px; height: 34px; margin-right: 16px; }
.orb svg { width: 34px; height: 34px; }
.dots { flex: none; width: 9px; height: 32px; background: radial-gradient(circle, #35435c 1px, transparent 1px) 0 0 / 3px 4px; }
.plain { width: 32px; margin: 0 17px 0 22px; }
.plain svg { width: 32px; height: 32px; }
.app-btn { display: flex; align-items: center; justify-content: center; flex: none; width: 59px; height: 39px; margin-right: 3px; border: 1px solid #5c7898; border-radius: 3px; box-shadow: inset 0 0 0 1px #dce8f4; background: linear-gradient(135deg, #d4e2f0, #b4cbe2 50%, #a4bfdc); }
.app-btn:nth-of-type(4) { background: linear-gradient(135deg, #f6fafd, #dbe8f4); }
.app-btn svg { width: 32px; height: 32px; }
.tray { display: flex; align-items: center; margin-left: auto; width: 255px; color: #fff; height: 39px; }
.tray svg { width: 16px; height: 16px; }
.ime { width: 14px; margin: 0 7px 4px 9px; font: 12px/16px "Liberation Serif", serif; }
.tray .t1 { margin-right: 7px; }
.tray .t2 { width: 12px; height: 18px; margin: 0 15px 8px 1px; }
.tray .t3 { height: 18px; margin-right: 11px; }
.tray .t4 { margin-right: 8px; }
.clock { margin: 18px 0 0 11px; }
.menu { position: absolute; display: flex; flex-direction: column; background: #efefef; border: 1px solid #8a8a8a; border-top-color: #999; box-shadow: 1px 1px #777, 3px 3px 3px #0006; z-index: 2; padding: 2px; }
.menu button { display: flex; align-items: center; height: 22px; text-align: left; position: relative; }
.menu hr { width: auto; height: 2px; border: 0; margin: 3px 10px 4px; background: linear-gradient(#b4b4b4 50%, #fff 50%); }
.menu .hot { background: #5b94fd; color: #fff; }
.file { left: 0; top: 44px; width: 166px; padding-left: 0; border-left: 0; }
.file hr { margin-left: 0; }
.file button { padding-right: 13px; }
.file .key { margin-left: auto; }
.more { margin-left: auto; margin-right: -8px; border: 4px solid transparent; border-left: 5px solid currentColor; border-right: 0; }
.export { left: 163px; top: 171px; width: 163px; }
.ico { width: 27px; align-self: stretch; display: flex; flex-direction: column; padding-left: 3px; flex: none; }
.ico em { font: 700 6px/8px "DejaVu Sans", sans-serif; color: #33206c; margin-top: 2px; }
.ico i { margin-left: 11px; margin-top: 2px; width: 0; border: 3px solid transparent; border-left: 5px solid #922292; border-right: 0; }
.pointer { position: absolute; left: 234px; top: 581px; width: 32px; height: 34px; z-index: 3; }
</style>
